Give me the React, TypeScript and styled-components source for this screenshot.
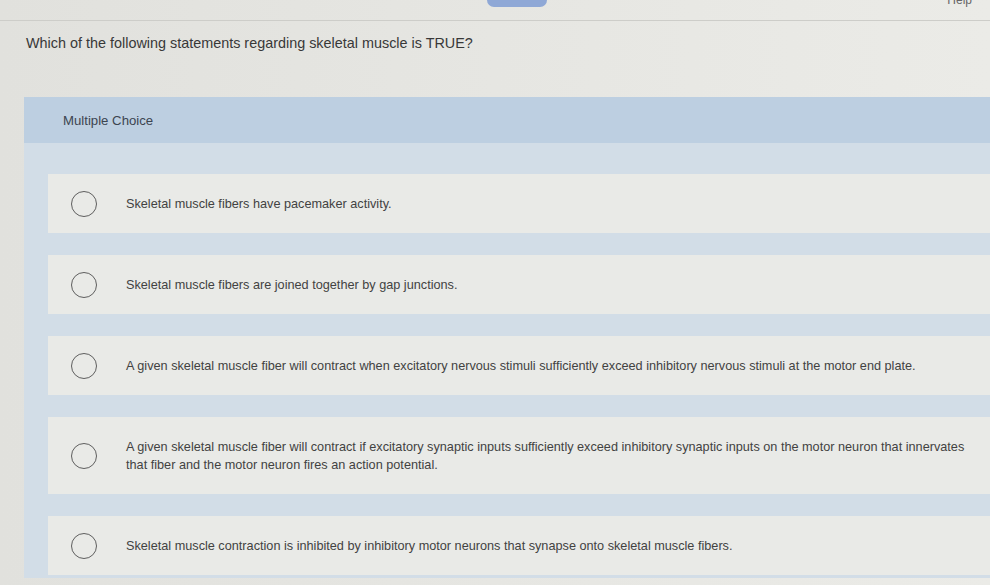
import React from 'react'
import styled, { createGlobalStyle } from 'styled-components'

const GlobalStyle = createGlobalStyle`
  html, body {
    margin: 0;
    padding: 0;
    background: #e4e4e0;
    font-family: 'Liberation Sans', Arial, sans-serif;
    overflow: hidden;
  }
`

const Page = styled.div`
  width: 990px;
  height: 585px;
  overflow: hidden;
  background: linear-gradient(90deg, #e1e1dd 0%, #e6e6e2 50%, #ebebe7 100%);
`

const TopBar = styled.div`
  height: 20px;
  border-bottom: 1px solid #cdcdc9;
  display: flex;
  align-items: flex-start;
`

const TopButton = styled.div`
  margin-left: 487px;
  width: 60px;
  height: 7px;
  background: #8fa8d6;
  border-radius: 0 0 8px 8px;
`

const HelpLink = styled.span`
  margin-left: auto;
  margin-right: 18px;
  margin-top: -6px;
  font-size: 12px;
  line-height: 12px;
  color: #666;
`

const Question = styled.h1`
  margin: 0;
  padding: 14px 26px 0;
  height: 76px;
  box-sizing: border-box;
  font-size: 14.4px;
  font-weight: 400;
  color: #383838;
`

const Panel = styled.section`
  margin-left: 24px;
  background: #d2dde7;
  height: 481px;
  overflow: hidden;
`

const PanelHeader = styled.div`
  height: 46px;
  display: flex;
  align-items: center;
  padding-left: 39px;
  background: #bdcfe1;
  font-size: 13.2px;
  color: #3c4550;
`

const Choices = styled.div`
  display: flex;
  flex-direction: column;
  gap: 22px;
  padding: 31px 0 0 24px;
`

const Choice = styled.label<{ $tall?: boolean }>`
  display: flex;
  align-items: center;
  gap: 29px;
  min-height: ${({ $tall }) => ($tall ? '77px' : '59px')};
  padding: 0 22px 0 23px;
  background: #e9eae7;
  cursor: pointer;
`

const Radio = styled.span`
  flex: none;
  width: 24px;
  height: 24px;
  border: 1.5px solid #5e5e5e;
  border-radius: 50%;
`

const ChoiceText = styled.span`
  font-size: 12.7px;
  line-height: 18px;
  color: #424242;
`

const choices = [
  'Skeletal muscle fibers have pacemaker activity.',
  'Skeletal muscle fibers are joined together by gap junctions.',
  'A given skeletal muscle fiber will contract when excitatory nervous stimuli sufficiently exceed inhibitory nervous stimuli at the motor end plate.',
  'A given skeletal muscle fiber will contract if excitatory synaptic inputs sufficiently exceed inhibitory synaptic inputs on the motor neuron that innervates that fiber and the motor neuron fires an action potential.',
  'Skeletal muscle contraction is inhibited by inhibitory motor neurons that synapse onto skeletal muscle fibers.'
]

export default function App() {
  return (
    <Page>
      <GlobalStyle />
      <TopBar>
        <TopButton />
        <HelpLink>Help</HelpLink>
      </TopBar>
      <Question>Which of the following statements regarding skeletal muscle is TRUE?</Question>
      <Panel>
        <PanelHeader>Multiple Choice</PanelHeader>
        <Choices>
          {choices.map((text, i) => (
            <Choice key={i} $tall={i === 3}>
              <Radio />
              <ChoiceText>{text}</ChoiceText>
            </Choice>
          ))}
        </Choices>
      </Panel>
    </Page>
  )
}
